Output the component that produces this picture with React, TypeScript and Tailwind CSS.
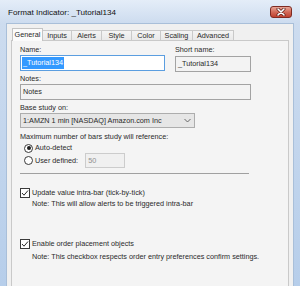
import React from "react";

const tabs = [
  { label: "General", w: "w-[31px]", active: true },
  { label: "Inputs", w: "w-[29px]" },
  { label: "Alerts", w: "w-[30px]" },
  { label: "Style", w: "w-[30px]" },
  { label: "Color", w: "w-[29px]" },
  { label: "Scaling", w: "w-[32px]" },
  { label: "Advanced", w: "w-[41px]" },
];

const Check = () => (
  <div className="w-[10px] h-[10px] border border-[#3a3a3a] bg-white flex items-center justify-center">
    <svg width="8" height="8" viewBox="0 0 8 8">
      <polyline points="1,4 3,6.2 7,1.5" fill="none" stroke="#2a2a2a" strokeWidth="1" />
    </svg>
  </div>
);

const Radio = ({ on }: { on?: boolean }) => (
  <div className="w-[9px] h-[9px] rounded-full border border-[#3a3a3a] bg-white flex items-center justify-center">
    {on && <div className="w-[4px] h-[4px] rounded-full bg-[#1e1e1e]" />}
  </div>
);

export default function App() {
  return (
    <div className="w-[300px] h-[286px] overflow-hidden flex flex-col bg-[#bcd2ec] font-['Liberation_Sans',Arial,sans-serif] text-[#2a2a2a]">
      {/* title bar */}
      <div className="h-[23px] shrink-0 flex items-start pl-[8px] pr-[8px] bg-gradient-to-b from-[#e4edf8] to-[#cddcef]">
        <div className="pt-[8px] text-[8.1px] leading-[10px] text-[#111]">Format Indicator: _Tutorial134</div>
        <div className="ml-auto mt-[6px] w-[22px] h-[12px] rounded-[3px] border border-[#7e2b22] bg-gradient-to-b from-[#e8a596] via-[#d26a58] to-[#c0402e] flex items-center justify-center">
          <svg width="10" height="8" viewBox="0 0 10 8">
            <path d="M2 1 L8 7 M8 1 L2 7" stroke="#5b1d16" strokeWidth="3" strokeLinecap="round" />
            <path d="M2 1 L8 7 M8 1 L2 7" stroke="#ffffff" strokeWidth="1.6" strokeLinecap="round" />
          </svg>
        </div>
      </div>

      <div className="flex-1 px-[6px] bg-gradient-to-b from-[#cddcef] to-[#b5cdea]">
        <div className="h-full border-l border-r border-t border-[#a9bfd9] bg-[#f0f0f0] px-[4px] text-[7.25px] leading-[10px]">
          {/* tabs */}
          <div className="mt-[4px] h-[12px] ml-[1px] flex items-end">
            {tabs.map((t) =>
              t.active ? (
                <div
                  key={t.label}
                  className={`${t.w} h-[13px] -mb-px relative z-10 border-l border-t border-r border-[#c4c4c4] bg-[#fbfbfb] text-center pt-[1px]`}
                >
                  {t.label}
                </div>
              ) : (
                <div
                  key={t.label}
                  className={`${t.w} h-[10px] border-t border-r border-[#c9c9c9] bg-gradient-to-b from-[#f4f4f4] to-[#e9e9e9] text-center leading-[9px]`}
                >
                  {t.label}
                </div>
              )
            )}
          </div>

          {/* tab page */}
          <div className="h-[260px] border border-[#c9c9c9] bg-[#f4f4f4] pl-[8px]">
            <div className="mt-[4px] flex">
              <div className="w-[155px]">Name:</div>
              <div>Short name:</div>
            </div>
            <div className="flex items-start">
              <div className="w-[145px] h-[16px] border border-[#5b9ee0] bg-white pl-[1px] pt-[1px] flex items-start">
                <span className="bg-[#3399ff] text-white px-[1px] leading-[12px]">_Tutorial134</span>
              </div>
              <div className="ml-[10px] mt-[1px] w-[76px] h-[16px] border border-[#a3a3a3] bg-[#f3f3f3] pl-[2px] flex items-center">
                _Tutorial134
              </div>
            </div>

            <div className="mt-[2px]">Notes:</div>
            <div className="w-[231px] h-[16px] border border-[#a3a3a3] bg-[#f3f3f3] pl-[2px] flex items-center">Notes</div>

            <div className="mt-[3px]">Base study on:</div>
            <div className="w-[175px] h-[15px] border border-[#adadad] bg-[#e6e6e6] pl-[2px] pr-[3px] flex items-center">
              <span>1:AMZN 1 min [NASDAQ] Amazon.com Inc</span>
              <svg className="ml-auto" width="7" height="5" viewBox="0 0 7 5">
                <polyline points="0.5,1 3.5,4 6.5,1" fill="none" stroke="#5a5a5a" strokeWidth="0.9" />
              </svg>
            </div>

            <div className="mt-[4px]">Maximum number of bars study will reference:</div>
            <div className="mt-[1px] h-[10px] pl-[4px] flex items-center gap-[2px]">
              <Radio on />
              <span>Auto-detect</span>
            </div>
            <div className="h-[15px] pl-[4px] flex items-center">
              <Radio />
              <span className="ml-[2px]">User defined:</span>
              <div className="ml-[7px] w-[40px] h-[15px] border border-[#cccccc] bg-[#f0f0f0] pl-[2px] flex items-center text-[#8f8f8f]">
                50
              </div>
            </div>

            <div className="mt-[5px] w-[229px] border-t border-[#a0a0a0]" />

            <div className="mt-[14px] h-[10px] flex items-center gap-[2px]">
              <Check />
              <span>Update value intra-bar (tick-by-tick)</span>
            </div>
            <div className="mt-[1px] pl-[12px]">Note: This will allow alerts to be triggered intra-bar</div>

            <div className="mt-[30px] h-[10px] flex items-center gap-[2px]">
              <Check />
              <span>Enable order placement objects</span>
            </div>
            <div className="mt-[3px] pl-[12px]">Note: This checkbox respects order entry preferences confirm settings.</div>
          </div>
        </div>
      </div>
    </div>
  );
}
